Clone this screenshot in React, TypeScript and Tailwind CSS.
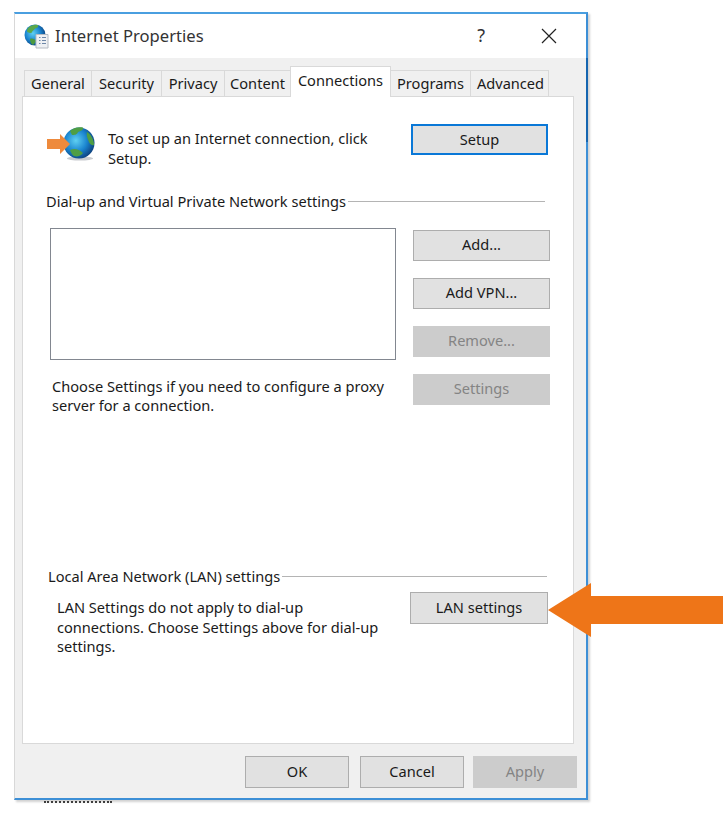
import React from 'react';

const GlobeDefs = ({ id }: { id: string }) => (
    <defs>
        <radialGradient id={id} cx="40%" cy="42%" r="65%">
            <stop offset="0%" stopColor="#5fd0f2" />
            <stop offset="55%" stopColor="#1a84cf" />
            <stop offset="100%" stopColor="#0b3c78" />
        </radialGradient>
    </defs>
);

const TitleIcon = () => (
    <svg width="25" height="25" viewBox="0 0 25 25" className="shrink-0 blur-[0.3px]">
        <GlobeDefs id="titleGlobe" />
        <circle cx="11" cy="11" r="10.500" fill="url(#titleGlobe)" />
        <path d="M4 4c3-3 7-3.500 10-3 1 2-1 3-3 3.500-1 2-3 2-3 4-2 1-4 0-5-1 0-1 0-2 1-3.500z" fill="#5aa84a" />
        <path d="M6 15c2-1 5 0 6 2-1 2-2 3-3 4-2-1-3-4-3-6z" fill="#4c9a3f" />
        <path d="M12 10.500h12v13.500H12z" fill="#eef0f3" stroke="#b4bac2" />
        <path d="M15 13.500h1.500M18 13.500h4M15 16.500h1.500M18 16.500h4M15 19.500h1.500M18 19.500h4" stroke="#6d87a8" strokeWidth="1" />
    </svg>
);

const ConnectIcon = () => (
    <svg width="50" height="35" viewBox="0 0 50 35" className="mt-[2px] shrink-0 blur-[0.4px]">
        <GlobeDefs id="connectGlobe" />
        <ellipse cx="34" cy="32.500" rx="13" ry="2" fill="#c9ccd0" />
        <circle cx="33" cy="17" r="15.500" fill="url(#connectGlobe)" />
        <path d="M24 5c3-3 8-4.500 13-3.500 1 2-2 3.500-5 4.500-1 3-4 3-6 3z" fill="#4f9e44" />
        <path d="M41 6c4 2 7 8 7 13-2 1-4-1-5-3s-3-7-2-10z" fill="#4f9e44" />
        <path d="M24 24c4-2 9-1 13 3-2 3-6 4-9 3-2-1-3-4-4-6z" fill="#4f9e44" />
        <path d="M1 13h13V8l10 10-10 10v-5H1z" fill="#ee8a3c" />
    </svg>
);

const Btn = ({ label, disabled, className }: { label: string; disabled?: boolean; className: string }) => (
    <button
        className={`flex items-center justify-center border ${disabled ? 'border-[#cccccc] bg-[#cccccc] text-[#848484]' : 'border-[#adadad] bg-[#e1e1e1] text-[#1a1a1a]'} ${className}`}
    >
        {label}
    </button>
);

const GroupLabel = ({ label, className }: { label: string; className: string }) => (
    <div className={`flex items-center ${className}`}>
        <span className="whitespace-nowrap">{label}</span>
        <div className="ml-[2px] h-px flex-1 bg-[#b4b4b4]" />
    </div>
);

const tabs = [
    { label: 'General', width: 'w-[67px]' },
    { label: 'Security', width: 'w-[70px]' },
    { label: 'Privacy', width: 'w-[63px]' },
    { label: 'Content', width: 'w-[66px]' },
];

export default function App() {
    return (
        <div className="relative h-[813px] w-[724px] overflow-hidden bg-white font-['Noto_Sans',sans-serif] text-[14.600px] leading-[19.500px] text-[#1a1a1a]">
            <div className="relative z-10 ml-[14px] mt-[12px] flex h-[788px] w-[574px] flex-col border-b-2 border-l border-r-2 border-t-2 border-b-[#3d8fd6] border-l-[#d8d8d8] border-r-[#3d8fd6] border-t-[#4a9fe0] bg-[#f0f0f0] shadow-[2px_2px_2px_rgba(0,0,0,0.18)]">
                {/* darker stretch of the window edge */}
                <div className="absolute -right-[2px] top-[44px] h-[84px] w-[2px] bg-[#1565b0]" />

                {/* title bar */}
                <div className="flex h-[44px] shrink-0 items-center bg-white pl-[9px]">
                    <TitleIcon />
                    <span className="ml-[6px] text-[16.600px] text-[#333333]">Internet Properties</span>
                    <span className="ml-auto text-[18px] text-[#333333]">?</span>
                    <svg width="16" height="16" viewBox="0 0 16 16" className="ml-[56px] mr-[29px]">
                        <path d="M1 1l14 14M15 1L1 15" stroke="#222222" strokeWidth="1.200" fill="none" />
                    </svg>
                </div>

                {/* tabs */}
                <div className="ml-[9px] mt-[8px] flex h-[30px] shrink-0 items-end">
                    {tabs.map((tab) => (
                        <div key={tab.label} className={`flex h-[26px] items-center justify-center border-l border-t border-[#d9d9d9] bg-[#f0f0f0] ${tab.width}`}>
                            {tab.label}
                        </div>
                    ))}
                    <div className="z-10 -mb-px flex h-[31px] w-[101px] items-start justify-center border-x border-t border-[#d9d9d9] bg-white pt-[4px]">
                        Connections
                    </div>
                    <div className="flex h-[26px] w-[79px] items-center justify-center border-t border-[#d9d9d9]">Programs</div>
                    <div className="flex h-[26px] w-[79px] items-center justify-center border-x border-t border-[#d9d9d9] pl-[2px]">Advanced</div>
                </div>

                {/* connections panel */}
                <div className="ml-[7px] flex h-[648px] w-[552px] shrink-0 flex-col border border-[#d9d9d9] bg-white">
                    <div className="ml-[23px] mt-[27px] flex h-[37px] items-start">
                        <ConnectIcon />
                        <p className="ml-[12px] mt-[5px] w-[290px]">To set up an Internet connection, click Setup.</p>
                        <button className="ml-[13px] h-[31px] w-[137px] border-2 border-[#0a78d7] bg-[#e1e1e1]">Setup</button>
                    </div>

                    <GroupLabel label="Dial-up and Virtual Private Network settings" className="ml-[23px] mt-[31px] w-[499px]" />

                    <div className="ml-[27px] mt-[16px] flex items-start">
                        <div className="w-[346px]">
                            <div className="h-[132px] w-full border border-[#828790] bg-white" />
                            <p className="ml-[2px] mt-[17px] w-[340px]">Choose Settings if you need to configure a proxy server for a connection.</p>
                        </div>
                        <div className="ml-[17px] mt-[2px] flex flex-col gap-[17px]">
                            <Btn label="Add..." className="h-[31px] w-[137px]" />
                            <Btn label="Add VPN..." className="h-[31px] w-[137px]" />
                            <Btn label="Remove..." disabled className="h-[31px] w-[137px]" />
                            <Btn label="Settings" disabled className="h-[31px] w-[137px]" />
                        </div>
                    </div>

                    <GroupLabel label="Local Area Network (LAN) settings" className="ml-[25px] mt-[151px] w-[499px]" />

                    <div className="mt-[6px] flex items-start">
                        <p className="ml-[34px] mt-[6px] w-[345px]">
                            LAN Settings do not apply to dial-up
                            <br />
                            connections. Choose Settings above for dial-up
                            <br />
                            settings.
                        </p>
                        <Btn label="LAN settings" className="ml-[8px] h-[32px] w-[138px]" />
                    </div>
                </div>

                {/* footer */}
                <div className="ml-[230px] mt-[12px] flex items-start">
                    <Btn label="OK" className="h-[32px] w-[104px]" />
                    <Btn label="Cancel" className="ml-[11px] h-[32px] w-[104px]" />
                    <Btn label="Apply" disabled className="ml-[9px] h-[32px] w-[104px]" />
                </div>
            </div>

            {/* bit of the page behind the dialog showing under its edge */}
            <div className="absolute left-[44px] top-[801px] w-[68px] border-t-2 border-dotted border-[#444444]" />

            {/* call-out arrow */}
            <svg width="175" height="56" viewBox="0 0 175 56" className="absolute left-[548px] top-[582px] z-20">
                <path d="M0 28L43 1v13h132v28H43v13z" fill="#ee7518" />
            </svg>
        </div>
    );
}
